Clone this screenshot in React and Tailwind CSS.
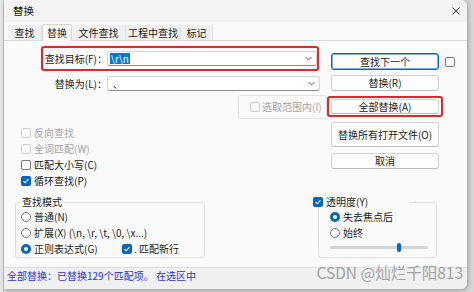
import React from "react";

// Notepad++ "替换" dialog (Windows 11 look)

function Check({ checked = false, disabled = false }) {
  if (checked) {
    return (
      <span className="w-[10px] h-[10px] shrink-0 rounded-[2px] bg-[#0067c0] flex items-center justify-center">
        <svg width="8" height="8" viewBox="0 0 8 8">
          <path d="M1.5 4.2 L3.2 5.8 L6.5 2.2" fill="none" stroke="#fff" strokeWidth="1.1" />
        </svg>
      </span>
    );
  }
  return (
    <span
      className={
        disabled
          ? "w-[10px] h-[10px] shrink-0 rounded-[2px] border border-[#cdcdcd] bg-white"
          : "w-[10px] h-[10px] shrink-0 rounded-[2px] border border-[#7a7a7a] bg-white"
      }
    />
  );
}

function Radio({ on = false }) {
  if (on) {
    return (
      <span className="w-[10px] h-[10px] shrink-0 rounded-full bg-[#0067c0] flex items-center justify-center">
        <span className="w-[4px] h-[4px] rounded-full bg-white" />
      </span>
    );
  }
  return <span className="w-[10px] h-[10px] shrink-0 rounded-full border border-[#7a7a7a] bg-white" />;
}

function Combo({ width, children }) {
  return (
    <div
      className="h-[15px] flex items-center justify-between bg-white border border-[#d6d6d6] border-b-[#8d8d8d] rounded-[3px] pl-[2px] pr-[4px]"
      style={{ width }}
    >
      <div className="flex items-center">{children}</div>
      <svg width="7" height="5" viewBox="0 0 7 5">
        <path d="M0.5 1 L3.5 4 L6.5 1" fill="none" stroke="#555" strokeWidth="0.9" />
      </svg>
    </div>
  );
}

function Button({ h = "h-[16px]", primary = false, children }) {
  return (
    <div
      className={
        (primary
          ? "border border-[#0067c0] shadow-[inset_0_0_0_0.5px_#0067c0] "
          : "border border-[#d3d3d3] border-b-[#bdbdbd] ") +
        h +
        " w-[108px] rounded-[3px] bg-[#fdfdfd] flex items-center justify-center"
      }
    >
      {children}
    </div>
  );
}

const tabs = [
  { label: "查找", w: "w-[34px]" },
  { label: "替换", w: "w-[30px]", active: true },
  { label: "文件查找", w: "w-[54px]" },
  { label: "工程中查找", w: "w-[55px]" },
  { label: "标记", w: "w-[32px]" },
];

export default function App() {
  return (
    <div className="w-[474px] h-[292px] bg-[#d6d6d6] flex relative overflow-hidden font-['Noto_Sans_CJK_SC','Liberation_Sans',sans-serif] text-[10px] leading-[12px] text-[#1b1b1b]">
      {/* window behind */}
      <div className="w-[4px] h-full bg-[#e6e6e6] border-r border-[#c4c4c4]" />

      <div className="w-[463px] h-[289px] bg-[#fafafa] flex flex-col rounded-r-[6px] shadow-[1px_1px_4px_rgba(0,0,0,0.3)]">
        {/* Title bar */}
        <div className="h-[22px] shrink-0 flex items-center justify-between pl-[9px] pr-[7px] bg-[#f3f3f3] rounded-tr-[6px]">
          <span className="text-[10.5px]">替换</span>
          <svg width="8" height="8" viewBox="0 0 8 8">
            <path d="M0.5 0.5 L7.5 7.5 M7.5 0.5 L0.5 7.5" stroke="#333" strokeWidth="1" />
          </svg>
        </div>

        {/* Tabs */}
        <div className="h-[19px] shrink-0 flex items-end pl-[4px] border-b border-[#dadada]">
          {tabs.map((t) =>
            t.active ? (
              <div
                key={t.label}
                className={t.w + " h-[17px] -mb-[1px] bg-white border border-b-0 border-[#d4d4d4] rounded-t-[2px] flex items-center justify-center"}
              >
                {t.label}
              </div>
            ) : (
              <div
                key={t.label}
                className={t.w + " h-[15px] bg-[#f0f0f0] border-r border-[#e0e0e0] flex items-center justify-center"}
              >
                {t.label}
              </div>
            )
          )}
        </div>

        {/* Panel */}
        <div className="h-[226px] shrink-0 flex flex-col">
          {/* Upper part */}
          <div className="h-[150px] flex">
            {/* Left column */}
            <div className="w-[323px] flex flex-col pt-[5px]">
              <div className="ml-[37px] w-[278px] h-[25px] border-2 border-[#e4252b] rounded-[3px] flex items-center">
                <span className="w-[64px] text-right">查找目标(F)：</span>
                <Combo width={210}>
                  <span className="bg-[#0078d7] text-white px-[1px] leading-[11px]">\r\n</span>
                </Combo>
              </div>

              <div className="mt-[5px] ml-[39px] flex items-center">
                <span className="w-[64px] text-right">替换为(L)：</span>
                <Combo width={213}>
                  <span className="pl-[3px]">、</span>
                </Combo>
              </div>

              <div className="mt-[4px] ml-[234px] w-[89px] h-[24px] border border-[#e2e2e2] rounded-[3px] flex items-center gap-[2px] pl-[11px] text-[#a4a4a4]">
                <Check disabled />
                <span>选取范围内(I)</span>
              </div>

              <div className="mt-[6px] pl-[17px] flex flex-col">
                <div className="h-[16px] flex items-center gap-[3px] text-[#a4a4a4]">
                  <Check disabled />
                  <span>反向查找</span>
                </div>
                <div className="h-[16px] flex items-center gap-[3px] text-[#a4a4a4]">
                  <Check disabled />
                  <span>全词匹配(W)</span>
                </div>
                <div className="h-[16px] flex items-center gap-[3px]">
                  <Check />
                  <span>匹配大小写(C)</span>
                </div>
                <div className="h-[16px] flex items-center gap-[3px]">
                  <Check checked />
                  <span>循环查找(P)</span>
                </div>
              </div>
            </div>

            {/* Right column: buttons */}
            <div className="flex flex-col">
              <div className="mt-[12px] ml-[4px] flex items-center gap-[6px]">
                <Button h="h-[17px]" primary>查找下一个</Button>
                <Check />
              </div>
              <div className="mt-[5px] ml-[4px]">
                <Button>替换(R)</Button>
              </div>
              <div className="mt-[5px] w-[116px] h-[21px] border-2 border-[#e4252b] rounded-[3px] flex items-center pl-[2px]">
                <Button h="h-[15px]">全部替换(A)</Button>
              </div>
              <div className="mt-[5px] ml-[4px]">
                <Button h="h-[25px]">替换所有打开文件(O)</Button>
              </div>
              <div className="mt-[6px] ml-[4px]">
                <Button>取消</Button>
              </div>
            </div>
          </div>

          {/* Lower part: group boxes */}
          <div className="h-[76px] flex items-start">
            <fieldset className="mt-[5px] ml-[11px] w-[190px] border border-[#dedede] rounded-[3px]">
              <legend className="ml-[5px] px-[1px] leading-[12px]">查找模式</legend>
              <div className="pt-[1px] pl-[5px] flex flex-col">
                <div className="h-[16px] flex items-center gap-[3px]">
                  <Radio />
                  <span>普通(N)</span>
                </div>
                <div className="h-[16px] flex items-center gap-[3px]">
                  <Radio />
                  <span>扩展(X) (\n, \r, \t, \0, \x...)</span>
                </div>
                <div className="h-[16px] flex items-center gap-[3px]">
                  <Radio on />
                  <span className="w-[85px]">正则表达式(G)</span>
                  <Check checked />
                  <span className="ml-[-1px]">. 匹配新行</span>
                </div>
              </div>
            </fieldset>

            <fieldset className="mt-[5px] ml-[113px] w-[119px] border border-[#dedede] rounded-[3px]">
              <legend className="-ml-[6px] w-[97px] flex items-center gap-[3px] leading-[12px]">
                <Check checked />
                <span>透明度(Y)</span>
              </legend>
              <div className="pt-[1px] pl-[11px] pb-[4px] flex flex-col">
                <div className="h-[16px] flex items-center gap-[3px]">
                  <Radio on />
                  <span>失去焦点后</span>
                </div>
                <div className="h-[16px] flex items-center gap-[3px]">
                  <Radio />
                  <span>始终</span>
                </div>
                <div className="h-[12px] flex items-center">
                  <div className="w-[67px] h-[3px] bg-[#d4d4d4] rounded-l-full" />
                  <div className="w-[4px] h-[9px] bg-[#0067c0] rounded-[2px]" />
                  <div className="w-[27px] h-[3px] bg-[#d4d4d4] rounded-r-full" />
                </div>
              </div>
            </fieldset>
          </div>
        </div>

        {/* Status bar */}
        <div className="flex-1 border-t border-[#dcdcdc] bg-[#f0f0f0] pl-[3px] pt-[2px] text-[#2b35d0] rounded-br-[6px]">
          全部替换：已替换129个匹配项。 在选区中
        </div>
      </div>

      {/* CSDN watermark */}
      <div className="absolute right-[11px] top-[263px] text-[15.5px] leading-[18px] text-[#a2a2a2] whitespace-nowrap">
        CSDN @灿烂千阳813
      </div>
    </div>
  );
}
